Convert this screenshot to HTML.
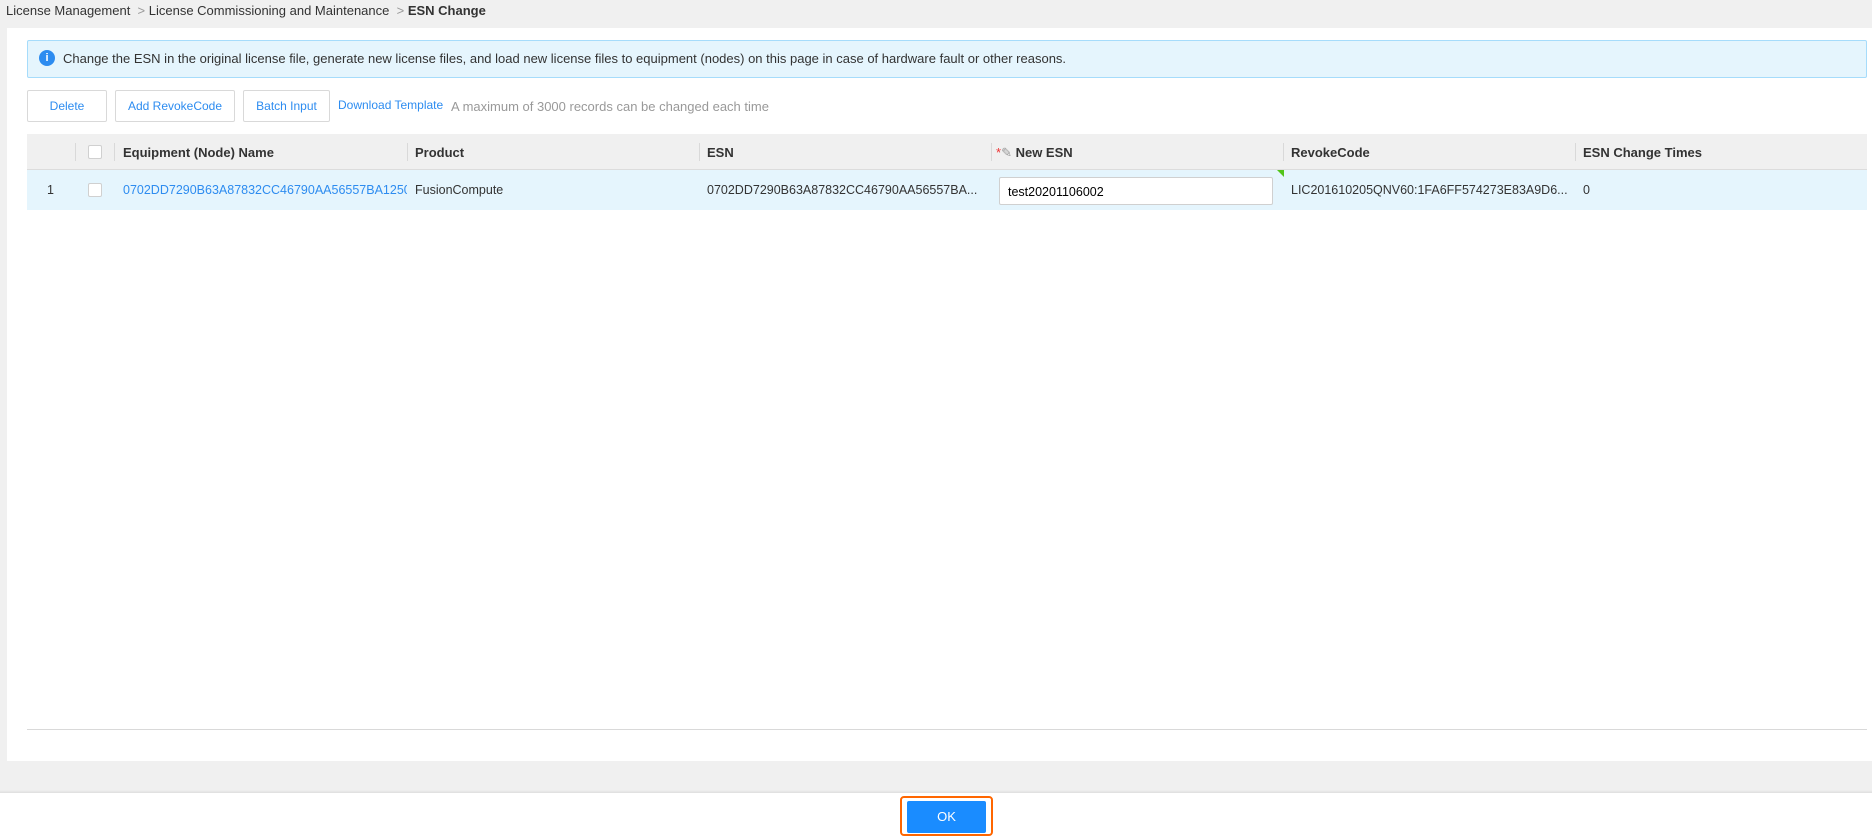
<!DOCTYPE html>
<html><head><meta charset="utf-8"><style>
*{box-sizing:border-box;margin:0;padding:0}
body{width:1872px;height:836px;background:#f0f0f0;font-family:"Liberation Sans",Arial,sans-serif;font-size:13px;color:#333;position:relative;overflow:hidden}
.a{position:absolute;white-space:nowrap}
.bc{top:3px;left:6px;font-size:13px;color:#333}
.panel{left:7px;top:28px;width:1865px;height:733px;background:#fff}
.info{left:27px;top:40px;width:1840px;height:38px;background:#e5f5fd;border:1px solid #a6dcfb;border-radius:2px}
.btn{top:90px;height:32px;border:1px solid #d9d9d9;border-radius:2px;background:#fff;color:#2d8cf0;font-size:12px;line-height:30px;text-align:center}
.hdr{left:27px;top:134px;width:1840px;height:36px;background:#f0f0f0;border-bottom:1px solid #dcdcdc}
.row{left:27px;top:170px;width:1840px;height:40px;background:#e5f5fd}
.th{top:145px;font-weight:bold;color:#333;font-size:13px}
.sep{top:143px;width:1px;height:18px;background:#d9d9d9}
.td{top:183px;font-size:12.5px}
.cb{width:14px;height:14px;border:1px solid #d0d0d0;background:#fff;border-radius:2px}
</style></head><body>
<div class="a bc">License Management &nbsp;<span style="color:#999">&gt;</span> License Commissioning and Maintenance &nbsp;<span style="color:#999">&gt;</span> <b>ESN Change</b></div>
<div class="a panel"></div>
<div class="a info"></div>
<div class="a" style="left:39px;top:50px;width:16px;height:16px;border-radius:50%;background:#2d8cf0;color:#fff;font-size:11px;font-weight:bold;text-align:center;line-height:16px">i</div>
<div class="a" style="left:63px;top:51px;font-size:13px;color:#333">Change the ESN in the original license file, generate new license files, and load new license files to equipment (nodes) on this page in case of hardware fault or other reasons.</div>
<div class="a btn" style="left:27px;width:80px">Delete</div>
<div class="a btn" style="left:115px;width:120px">Add RevokeCode</div>
<div class="a btn" style="left:243px;width:87px">Batch Input</div>
<div class="a" style="left:338px;top:98px;color:#2d8cf0;font-size:12px">Download Template</div>
<div class="a" style="left:451px;top:99px;color:#999">A maximum of 3000 records can be changed each time</div>
<div class="a hdr"></div>
<div class="a row"></div>
<div class="a sep" style="left:75px"></div>
<div class="a cb" style="left:88px;top:145px"></div>
<div class="a sep" style="left:114px"></div>
<div class="a th" style="left:123px">Equipment (Node) Name</div>
<div class="a sep" style="left:407px"></div>
<div class="a th" style="left:415px">Product</div>
<div class="a sep" style="left:699px"></div>
<div class="a th" style="left:707px">ESN</div>
<div class="a sep" style="left:991px"></div>
<div class="a th" style="left:996px"><span style="color:#e33;font-weight:normal">*</span><span style="color:#999;font-weight:normal">&#9998;</span> New ESN</div>
<div class="a sep" style="left:1283px"></div>
<div class="a th" style="left:1291px">RevokeCode</div>
<div class="a sep" style="left:1575px"></div>
<div class="a th" style="left:1583px">ESN Change Times</div>
<div class="a td" style="left:47px">1</div>
<div class="a cb" style="left:88px;top:183px"></div>
<div class="a td" style="left:123px;width:284px;overflow:hidden;color:#2d8cf0">0702DD7290B63A87832CC46790AA56557BA1250</div>
<div class="a td" style="left:415px">FusionCompute</div>
<div class="a td" style="left:707px">0702DD7290B63A87832CC46790AA56557BA...</div>
<div class="a" style="left:999px;top:177px;width:274px;height:28px;background:#fff;border:1px solid #d0d0d0;border-radius:2px;padding:7px 8px;font-size:12.5px;color:#000">test20201106002</div>
<div class="a" style="left:1277px;top:170px;width:0;height:0;border-top:7px solid #52c41a;border-left:7px solid transparent"></div>
<div class="a td" style="left:1291px">LIC201610205QNV60:1FA6FF574273E83A9D6...</div>
<div class="a td" style="left:1583px">0</div>
<div class="a" style="left:27px;top:729px;width:1840px;height:1px;background:#d9d9d9"></div>
<div class="a" style="left:0;top:790px;width:1872px;height:4px;background:linear-gradient(#f0f0f0,#d8d8d8)"></div>
<div class="a" style="left:0;top:793px;width:1872px;height:43px;background:#fff"></div>
<div class="a" style="left:900px;top:796px;width:93px;height:40px;border:2px solid #f60;border-radius:4px"></div>
<div class="a" style="left:907px;top:801px;width:79px;height:32px;background:#1a8cff;border-radius:2px;color:#fff;text-align:center;line-height:32px;font-size:13px">OK</div>
</body></html>
